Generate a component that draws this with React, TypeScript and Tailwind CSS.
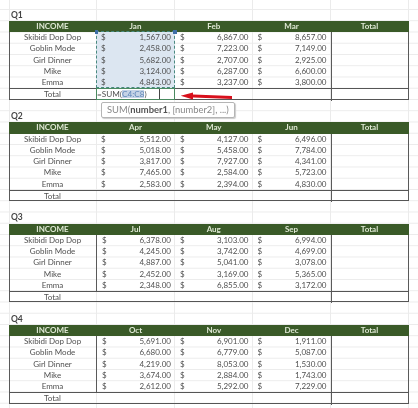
const sections = [
  { q: 'Q1', jan: 'none', m: ['Jan', 'Feb', 'Mar'], d: [
    ['1,567.00', '6,867.00', '8,657.00'], ['2,458.00', '7,223.00', '7,149.00'], ['5,682.00', '2,707.00', '2,925.00'], ['3,124.00', '6,287.00', '6,600.00'], ['4,843.00', '3,237.00', '3,800.00'] ] },
  { q: 'Q2', jan: 'none', m: ['Apr', 'May', 'Jun'], d: [
    ['5,512.00', '4,127.00', '6,496.00'], ['5,018.00', '5,458.00', '7,784.00'], ['3,817.00', '7,927.00', '4,341.00'], ['7,465.00', '2,584.00', '5,723.00'], ['2,583.00', '2,394.00', '4,830.00'] ] },
  { q: 'Q3', jan: 'dark', m: ['Jul', 'Aug', 'Sep'], d: [
    ['6,378.00', '3,103.00', '6,994.00'], ['4,245.00', '3,742.00', '4,699.00'], ['4,887.00', '5,041.00', '3,078.00'], ['2,452.00', '3,169.00', '5,365.00'], ['2,348.00', '6,855.00', '3,172.00'] ] },
  { q: 'Q4', jan: 'dark', m: ['Oct', 'Nov', 'Dec'], d: [
    ['5,691.00', '6,901.00', '1,911.00'], ['6,680.00', '6,779.00', '5,087.00'], ['4,219.00', '8,053.00', '1,530.00'], ['3,674.00', '2,884.00', '1,743.00'], ['2,612.00', '5,292.00', '7,229.00'] ] },
];
const names = ['Skibidi Dop Dop', 'Goblin Mode', 'Girl Dinner', 'Mike', 'Emma'];
const cols = 'grid grid-cols-[87px_79px_77.5px_78px_78px] h-[11.26px] items-center leading-[11.26px]';

function Section({ s, first }: { s: (typeof sections)[number]; first: boolean }) {
  return (
    <section className="h-[101.33px]">
      <div className="h-[11.26px] pl-[2px] font-bold text-[8.5px] leading-[11.26px] text-[#444]">{s.q}</div>
      <div className="w-[399.5px] border-x border-[#5a5a5a] box-border">
        <div className={`${cols} -mx-px bg-[#3a5a28] text-[#dfe8d4] font-bold text-center`}>
          <span>INCOME</span>
          {s.m.map((m) => <span key={m}>{m}</span>)}
          <span>Total</span>
        </div>
        {s.d.map((r, i) => (
          <div key={i} className={`${cols} -mx-px text-[#505050]`}>
            <span className="h-full text-center">{names[i]}</span>
            {r.map((v, j) => (
              <span key={j} className={`h-full flex justify-between pl-[5px] pr-[4px] ${j === 0 && s.jan === 'dark' ? 'border-l border-[#5a5a5a]' : ''} ${j === 0 && first ? 'bg-[#dce6f1]' : ''}`}>
                <span>$</span><span>{v}</span>
              </span>
            ))}
            <span className="h-full border-l border-[#5a5a5a]" />
          </div>
        ))}
        <div className={`${cols} -mx-px h-[11.8px] border-y border-[#555] text-[#505050] box-border`}>
          <span className="text-center">Total</span>
          <span />
          <span />
          <span />
          <span className="h-full border-l border-[#5a5a5a]" />
        </div>
      </div>
    </section>
  );
}

export default function App() {
  return (
    <div className="relative w-[418px] h-[408px] overflow-hidden bg-white font-['Lato','Liberation_Sans',sans-serif] text-[8px]">
      <div className="absolute inset-0 bg-[linear-gradient(to_bottom,#ebebeb_1px,transparent_1px)] bg-[length:100%_11.26px] bg-[position:0_9px]" />
      <div className="absolute left-[96px] right-0 inset-y-0 bg-[linear-gradient(to_right,#ebebeb_1px,transparent_1px)] bg-[length:78px_100%]" />
      <div className="absolute left-[9px] inset-y-0 w-px bg-[#ebebeb]" />
      <div className="relative blur-[0.35px] pl-[9px] pt-[9.74px]">
        {sections.map((s, i) => <Section key={s.q} s={s} first={i === 0} />)}
      </div>

      {/* copy-range marquee */}
      <div className="absolute left-[96px] top-[31px] w-[79px] h-[57px] border-[1.5px] border-dashed border-[#4a8a80] blur-[0.25px]" />
      <div className="absolute left-[94.5px] top-[30px] w-[3.5px] h-[3.5px] bg-[#3f6fa8]" />
      <div className="absolute left-[173px] top-[30px] w-[3.5px] h-[3.5px] bg-[#3f6fa8]" />
      {/* formula cell */}
      <div className="absolute left-[96px] top-[88px] w-[79px] h-[12px] bg-white border border-[#4a8a60] flex items-center text-[8.2px] leading-none text-[#505050] blur-[0.3px]">
        <span>=SUM(</span>
        <span className="bg-[#c5d3e6] text-[#5f86b8]">C4:C8</span>
        <span>)</span>
        <span className="ml-auto mr-[14px] w-px h-[10px] bg-[#444]" />
      </div>
      {/* arrow */}
      <svg className="absolute left-[176px] top-[88px] blur-[0.3px]" width="60" height="14" viewBox="0 0 60 14">
        <path d="M4.7 7.7 L17 4.5 L17 6.5 L56 8 L56 11 L17 9.5 L17 11.5 Z" fill="#d8101c" />
      </svg>
      {/* function tooltip */}
      <div className="absolute left-[101px] top-[102px] w-[134px] h-[15.5px] bg-white border border-[#b5b5b5] rounded-[2px] shadow-[1px_1px_1px_#ccc] flex items-center pl-[5px] text-[9.4px] text-[#888] whitespace-nowrap blur-[0.25px]">
        <span>SUM(</span><b className="text-[#555]">number1</b><span>, [number2], ...)</span>
      </div>
    </div>
  );
}
